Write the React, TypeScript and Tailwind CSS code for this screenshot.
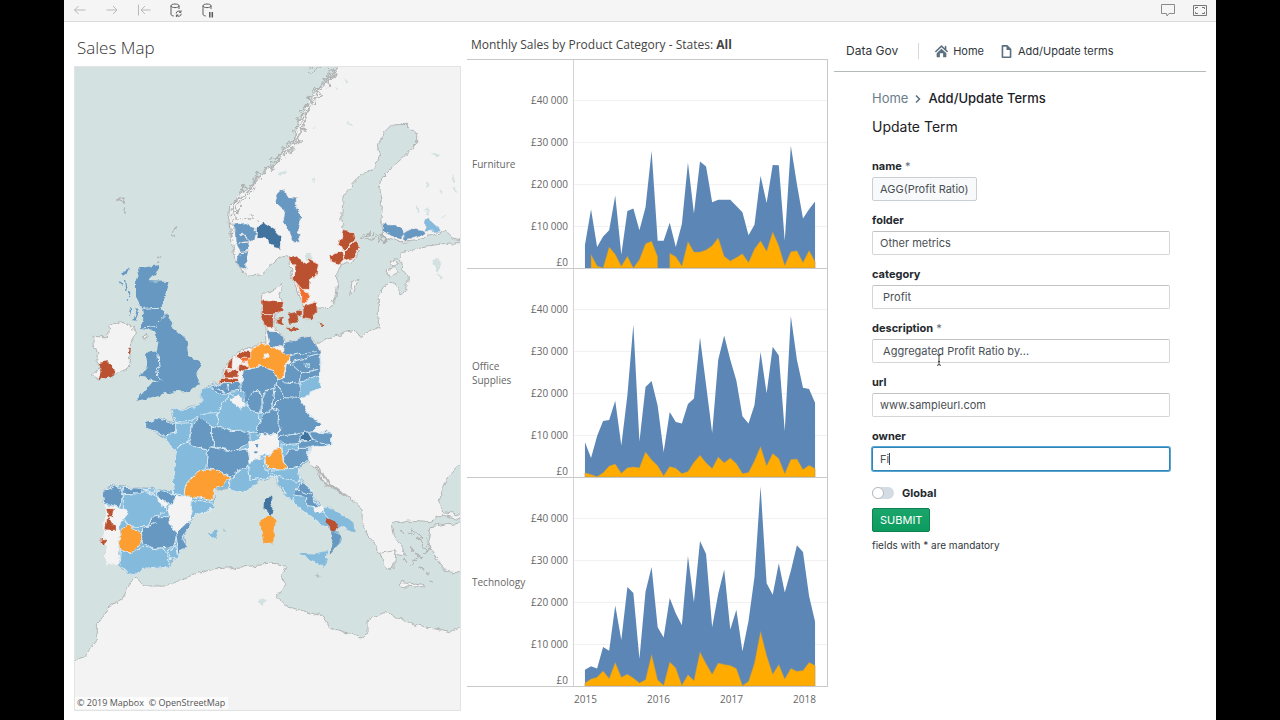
import type { ReactNode } from "react";

const MAP = {
  blue: "#6698c1",
  light: "#84bbdd",
  dark: "#41739f",
  red: "#ba5130",
  tangerine: "#f2702f",
  orange: "#fd9e32",
  land: "#f3f3f3",
  water: "#d3e2e1",
};

type Series = (number | null)[];

// monthly values in thousands of pounds, 2015-01 to 2018-03
const categories: { name: string; total: Series; part: Series }[] = [
  {
    name: "Furniture",
    total: [
      5.5, 14, 5, 7.5, 9, 17.3, 3.2, 13.6, 14.2, 9, 14.5, 28, 6.5, 6.5, 10.8, 5,
      10.5, 25.2, 13, 25.4, 24.2, 15.7, 16.3, 16.3, 16.3, 14.8, 13.3, 7.8, 10.3,
      22, 15.5, 24.6, 24.5, 6.5, 29.2, 20, 11.8, 14, 15.9,
    ],
    part: [
      null, 3.2, 0.5, 0, 5, 3.3, 0.4, 2.8, 0, 2, 5.8, 6.4, 2.7, null, 3.5, 2.7,
      0.5, 6.3, 3.8, 3.8, 4.3, 5.3, 7.2, 2.8, 1.7, 2.5, 3.4, 1.3, 4.5, 6.5, 4,
      8.6, 5.3, 0.6, 3.9, 4.1, 1.3, 4.2, 1.5,
    ],
  },
  {
    name: "Office Supplies",
    total: [
      8.3, 4.5, 9.8, 13.4, 13.6, 18.2, 7.5, 19.5, 36.4, 8.5, 21.5, 22.9, 17, 6,
      15.5, 13.1, 12.8, 17.4, 18.7, 33.3, 22, 10.5, 28, 33.8, 28, 23, 14.5,
      12.8, 17.2, 29.8, 20, 31.1, 29, 11, 38.4, 28, 21.3, 21, 17.7,
    ],
    part: [
      1, 0.6, 0.1, 1, 2.6, 3.1, 0.9, 2.2, 2.4, 2.2, 6, 4.1, 2.7, 0.3, 2.5, 2.1,
      0.8, 1.3, 3.5, 5.2, 3.4, 2, 4.8, 3.4, 4.5, 3.2, 0.8, 1.1, 3.9, 7.3, 2.7,
      5.6, 4.4, 0.8, 4.2, 4.3, 1.8, 2.8, 2,
    ],
  },
  {
    name: "Technology",
    total: [
      3.9, 4.7, 4.2, 9.3, 8.4, 19.2, 11, 23.6, 22.2, 6.5, 22.5, 28.4, 14, 11.6,
      21, 17.3, 14.5, 31, 20, 34.6, 31.5, 14, 22, 27.8, 13.5, 18.2, 8.3, 15.5,
      26, 47.6, 24.5, 21.8, 29.3, 22.3, 27.5, 33.6, 32, 21.5, 15.4,
    ],
    part: [
      0.7, 1.7, 2.1, 3.6, 1.8, 5.6, 2.1, 2.8, 1.9, 0.7, 1.5, 7.5, 1.4, 0.2, 5.7,
      4.3, 0.2, 2.7, 1.3, 8.1, 5.3, 2.8, 5.5, 5.1, 4.9, 4.2, 0.1, 1.1, 5.5, 13,
      7.3, 2.8, 5.1, 1.7, 4.2, 3.5, 3.7, 5.6, 4.9,
    ],
  },
];

const ticks = ["£40 000", "£30 000", "£20 000", "£10 000"];
const years = ["2015", "2016", "2017", "2018"];

// one closed area for every run of months without a gap
function areaPath(values: Series) {
  const x = (i: number) => (11 + i * 6.08).toFixed(1);
  let d = "";
  values.forEach((v, i) => {
    if (v === null) return;
    const first = i === 0 || values[i - 1] === null;
    const last = i === values.length - 1 || values[i + 1] === null;
    if (first) d += `M${x(i)} 208`;
    d += `L${x(i)} ${(208 - v * 4.19).toFixed(1)}`;
    if (last) d += `L${x(i)} 208Z`;
  });
  return d;
}

function ToolButton({ label, children }: { label: string; children: ReactNode }) {
  return (
    <button
      type="button"
      aria-label={label}
      className="flex h-5 w-8 items-center justify-center text-[#5c5c5c]"
    >
      <svg
        width="16"
        height="16"
        viewBox="0 0 16 16"
        fill="none"
        stroke="currentColor"
        strokeWidth="1"
      >
        {children}
      </svg>
    </button>
  );
}

function Toolbar() {
  return (
    <div className="flex h-[22px] justify-between border-b border-[#dcdcdc] bg-[#f5f5f5]">
      <div className="flex">
        <ToolButton label="Undo">
          <path d="M2.500 8H13.500M6.500 4l-4 4l4 4" stroke="#b9b9b9" />
        </ToolButton>
        <ToolButton label="Redo">
          <path d="M2.500 8H13M9 4l4 4-4 4" stroke="#b9b9b9" />
        </ToolButton>
        <ToolButton label="Revert">
          <path d="M2.500 2.500v11M5 8h9.500M9 4L5 8l4 4" stroke="#b9b9b9" />
        </ToolButton>
        <ToolButton label="Refresh">
          <path d="M3 3.800C3 1.400 11 1.400 11 3.800S3 6.200 3 3.800v8.700c0 .7 1.200 1.300 2.800 1.500M11 3.800V7" />
          <path d="M8.200 11.500a2.500 2.500 0 0 1 4.400-1.600M13.200 11.800a2.500 2.500 0 0 1-4.400 1.600M13 8.300v2h-2M8.400 15v-2h2" />
        </ToolButton>
        <ToolButton label="Pause">
          <path d="M3 3.800C3 1.400 11 1.400 11 3.800S3 6.200 3 3.800v8.700c0 .7 1.200 1.300 2.800 1.500M11 3.800V7" />
          <path d="M9.800 10v5.500M12.300 10v5.500" strokeWidth="1.500" />
        </ToolButton>
      </div>
      <div className="flex">
        <ToolButton label="Comments">
          <path
            d="M1.500 2.500h13v9H9l-2 2.500-.5-2.500h-5z"
            stroke="#8a8a8a"
          />
        </ToolButton>
        <ToolButton label="Full screen">
          <path d="M1.500 3.500h13v10h-13z" stroke="#777" />
          <path
            d="M3.500 7V5.500H6M10 5.500h2.500V7M12.500 10v1.500H10M6 11.500H3.500V10"
            stroke="#777"
          />
        </ToolButton>
      </div>
    </div>
  );
}

function SalesMap() {
  return (
    <section className="flex min-w-0 flex-col">
      <h2 className="flex h-11 items-center px-[3px] pt-2 font-['Open_Sans',sans-serif] text-[17px] font-light text-[#333]">
        Sales Map
      </h2>
      <div className="relative">
        <svg
          viewBox="222 198 1161 1935"
          className="block w-full"
          role="img"
          aria-label="Sales Map"
        >
          <defs>
            <filter
              id="coast"
              filterUnits="userSpaceOnUse"
              x="180"
              y="150"
              width="1250"
              height="2030"
              colorInterpolationFilters="sRGB"
            >
              <feTurbulence
                type="fractalNoise"
                baseFrequency="0.04"
                numOctaves="3"
                seed="4"
              />
              <feDisplacementMap
                in="SourceGraphic"
                scale="20"
                xChannelSelector="R"
                yChannelSelector="G"
              />
            </filter>
            <filter
              id="fjord"
              filterUnits="userSpaceOnUse"
              x="180"
              y="150"
              width="1250"
              height="2030"
              colorInterpolationFilters="sRGB"
            >
              <feTurbulence
                type="fractalNoise"
                baseFrequency="0.05"
                numOctaves="3"
                seed="9"
              />
              <feDisplacementMap
                in="SourceGraphic"
                scale="48"
                xChannelSelector="R"
                yChannelSelector="G"
              />
            </filter>
          </defs>
          <rect x="222" y="198" width="1161" height="1935" fill={MAP.water} />

          <g filter="url(#coast)" strokeLinejoin="round">
            <g fill={MAP.land} stroke="#b3b5b5" strokeWidth="3">
              {/* Scandinavia and Finland */}
              <path d="M1015 150L1012 200L982 245L942 280L927 310L902 350L892 385L882 430L852 445L832 490L792 515L752 560L712 590L692 620L687 665L695 720L705 770L720 810L745 828L780 825L815 795L840 772L860 765L868 775L875 830L892 870L908 912L910 955L935 958L952 940L952 925L990 922L1005 890L1012 840L1015 800L1060 785L1080 745L1050 700L1030 690L1025 650L1030 590L1062 550L1092 520L1127 500L1142 465L1134 440L1152 400L1177 375L1222 373L1250 400L1250 430L1212 470L1172 505L1142 535L1137 570L1147 620L1142 665L1145 690L1150 710L1200 725L1260 718L1300 705L1340 690L1350 715L1420 732V150z" />
              {/* mainland Europe */}
              <path d="M1420 726L1340 730L1300 735L1240 745L1200 765L1205 805L1225 830L1220 870L1200 880L1180 845L1150 860L1135 890L1135 940L1140 980L1100 995L1080 1010L1065 990L1010 1005L950 1030L925 1005L895 1015L860 1030L855 1010L830 990L820 980L825 940L850 915L840 885L845 850L825 865L785 885L782 940L795 985L798 1030L755 1040L710 1055L690 1080L670 1115L662 1148L632 1155L604 1170L602 1210L567 1222L542 1235L510 1222L522 1265L482 1255L437 1265L437 1285L482 1305L502 1320L522 1350L527 1380L527 1430L517 1470L462 1465L392 1462L342 1458L310 1475L317 1515L314 1590L302 1625L317 1640L314 1692L357 1693L382 1720L404 1725L432 1708L502 1702L527 1675L557 1640L552 1610L570 1570L592 1540L642 1515L637 1470L687 1462L732 1478L767 1450L785 1440L825 1430L845 1470L875 1500L930 1540L980 1580L1000 1610L988 1660L1025 1620L1005 1570L1060 1592L1055 1570L970 1525L940 1490L900 1440L895 1410L925 1378L945 1410L980 1450L1040 1485L1090 1530L1088 1580L1120 1630L1140 1660L1160 1700L1185 1705L1185 1660L1220 1665L1180 1610L1175 1575L1220 1560L1290 1565L1330 1546L1383 1558L1420 1552L1330 1538L1315 1500L1340 1440L1370 1400L1420 1345z" />
              <path d="M1420 1560L1340 1572L1290 1580L1280 1620L1310 1680L1340 1715L1420 1722z" />
              {/* North Africa */}
              <path d="M180 2010L252 1970L292 1920L292 1870L322 1825L367 1795L397 1740L410 1738L432 1758L502 1758L562 1730L622 1708L712 1702L812 1692L857 1698L842 1725L857 1750L832 1790L862 1820L912 1833L972 1850L992 1885L1052 1902L1077 1917L1104 1900L1104 1860L1157 1832L1192 1852L1252 1875L1352 1898L1420 1870V2180H180z" />
              <path d="M1202 1744L1277 1758L1270 1764L1202 1755z" />
              {/* Saaremaa, Gotland, Peloponnese */}
              <path d="M1155 810l30-10l15 15l-30 18zM1170 782l20-6l6 14l-18 8zM1055 850l22-18l-16 45l-12 10z" />
              <path d="M1140 1660l45-8l-4 46l-22 6z" />
              {/* Ireland */}
              <path d="M327 980L357 965L397 975L407 1005L392 1030L390 1070L382 1105L332 1125L302 1140L274 1125L302 1100L287 1080L297 1060L282 1035L282 1010L322 1010z" />
              <path d="M428 1015l12-12l-4 14z" />
              <path
                d="M1210 1680l14 10M1230 1640l12 14M1250 1610l10 12M1255 1700l14 12M1225 1600l12 4M1275 1715l12 6M1245 1660l14 6M1290 1740l10 6M1200 1590l12 8M945 1400l30 50l60 36M950 1395l40 60l50 34M350 600l18-6l2 12zM372 622l4 16M950 1725l10 6"
                strokeWidth="5"
              />
            </g>

            <g fill={MAP.water}>
              <path d="M918 762l18 0l2 14l-20 4zM1300 780l16-4l6 24l-8 22zM1308 822l20 8l-4 10zM772 1804l20-10l10 10l-14 10zM1292 460l26 4l-12 12zM832 520l20-12l8 6l-22 14z" />
              <path
                d="M1045 365l12 16M1355 530l12 14M1364 560l4 18M1280 545l6 14M1320 570l6 8M1250 620l4 20M1280 625v20M1325 655l14-6M940 540l8 2M1030 238l14 10M1010 265l6 2M940 378v6"
                stroke={MAP.water}
                strokeWidth="6"
              />
            </g>

            {/* Britain */}
            <g transform="translate(192 660)" fill={MAP.blue} stroke="#dcebf3" strokeWidth="2">
              <path
                d="M230 145L285 138L275 160L250 185L312 188L300 225L285 262L305 275L330 330L365 365L372 410L390 415L412 430L395 470L405 490L370 512L320 512L265 528L220 540L265 490L290 480L230 468L250 440L245 400L280 400L285 370L270 330L230 325L240 295L235 260L215 230L215 190z"
                stroke={MAP.blue}
                strokeWidth="4"
              />
              <path
                d="M232 325L270 320L305 288L308 275M235 268L285 265M282 400L285 440L278 460L292 478"
                fill="none"
                strokeWidth="3"
              />
              <path
                d="M175 160l20-12l-6 16zM165 185l8 14M195 210l10 18M200 265l-4 22M222 262l-12 40M185 180l4 30M192 235l6 8"
                stroke={MAP.blue}
                strokeWidth="4"
              />
              <path
                d="M325 40l4 10M335 22l-6 14M280 115l8-6M276 128l10-2"
                stroke="#b3b5b5"
                strokeWidth="4"
              />
              <path
                d="M110 430l26-4l4 14l10 16l-20 12l-22 10l4-22z"
                fill={MAP.red}
                stroke={MAP.red}
                strokeWidth="5"
              />
              <path d="M194 386l6 0l-2 18l-6-4z" fill={MAP.red} stroke="none" />
            </g>

            {/* Nordics and northern Germany */}
            <g
              transform="translate(660 540)"
              fill={MAP.red}
              stroke="#f6ece8"
              strokeWidth="2"
            >
              <path
                d="M175 38L192 30L205 50L232 52L232 90L245 110L235 140L240 185L222 188L205 150L190 120L195 95L165 70z"
                fill={MAP.blue}
              />
              <path
                d="M110 145L130 128L165 150L182 170L180 210L165 205L145 178L108 172z"
                fill={MAP.dark}
              />
              <path
                d="M45 135L75 130L105 148L100 175L85 190L78 225L78 270L58 262L52 245L62 215L48 190z"
                fill={MAP.blue}
                stroke={MAP.blue}
              />
              <path d="M50 190L90 185L62 160M60 215L82 212" fill="none" strokeWidth="4" />
              <path d="M485 132L515 135L548 150L545 178L520 172L488 152z" fill={MAP.blue} />
              <path d="M548 158L580 145L612 150L618 162L550 182z" fill={MAP.blue} />
              <path d="M615 125L628 115L655 140L655 155L615 158z" fill={MAP.light} />
              <path d="M368 152L400 155L405 180L370 212L358 195z" />
              <path d="M332 230L368 212L375 240L362 255L335 245z" />
              <path d="M375 212L408 180L418 200L400 235L375 242z" />
              <path d="M205 235L225 228L260 248L265 235L295 250L290 285L270 300L268 325L240 325L220 300L222 260z" />
              <path
                d="M230 315L265 340L270 350L258 370L245 370L245 345z"
                fill={MAP.tangerine}
              />
              <path d="M248 378L290 366L292 400L275 418L250 412z" />
              <path d="M122 360L190 368L188 392L160 402L125 400z" />
              <path d="M122 400L160 402L160 442L135 442z" />
              <path d="M168 415L190 412L190 434L172 430zM205 405L230 400L235 425L212 430zM230 390l12 0l-2 18l-10-6zM200 445l28 0l-8 8zM300 430l10 2l-4 6z" stroke={MAP.red} />
              <path d="M138 450L165 452L195 470L190 505L150 495z" fill={MAP.blue} />
              <path
                d="M195 490L235 475L265 465L290 495L300 520L302 600L230 605L205 570L210 530L190 520z"
                fill={MAP.blue}
              />
              <path
                d="M95 505L150 492L172 510L212 528L198 545L190 598L165 600L155 570L130 568L120 552L105 572L80 560z"
                fill={MAP.orange}
              />
              <path d="M132 522l12 0l0 10l-10 0z" fill={MAP.land} />
              <path d="M48 525L70 512L92 515L92 535L60 535z" />
              <path d="M60 535L90 535L82 550L68 548z" fill={MAP.tangerine} />
              <path d="M55 550L88 560L80 580L52 572zM28 540L38 536L36 565L24 568zM15 570L52 575L55 592L10 590zM2 592L55 596L58 625L34 622L0 606z" />
            </g>

            {/* Germany and Austria */}
            <g fill={MAP.blue} stroke="#dcebf3" strokeWidth="3">
              <path d="M730 1112L780 1100L822 1112L830 1140L855 1135L862 1090L960 1060L962 1140L965 1160L900 1195L930 1250L965 1270L940 1295L995 1300L995 1335L930 1345L925 1375L860 1402L850 1380L900 1340L840 1325L835 1300L770 1305L768 1290L790 1240L730 1200L725 1150z" />
              <path
                d="M785 1195L800 1170L825 1165L835 1130M785 1195L788 1240M825 1165L815 1225L840 1230L835 1300M815 1225L850 1190L895 1192M850 1190L830 1150M860 1080L905 1120L960 1105M870 1070L950 1055M790 1240L820 1225M840 1310L900 1300L940 1295M895 1330L935 1320L995 1335M905 1120L900 1150L850 1145"
                fill="none"
              />
              <path d="M900 1150L962 1125L965 1160L900 1195z" fill={MAP.light} />
              <path d="M915 1290L925 1298L938 1320L892 1325L912 1308z" fill={MAP.dark} />
              <path d="M912 1090l16-2l4 14l-18 2z" fill={MAP.light} />
            </g>

            {/* base tone of France, Iberia and Italy, under the regions */}
            <path
              d="M662 1148L632 1155L604 1170L602 1210L567 1222L542 1235L510 1222L522 1265L482 1255L437 1265L437 1285L482 1305L502 1320L522 1350L527 1380L527 1430L517 1470L462 1465L392 1462L342 1458L310 1475L317 1515L314 1590L302 1625L317 1640L314 1692L357 1693L382 1720L404 1725L432 1708L502 1702L527 1675L557 1640L552 1610L570 1570L592 1540L642 1515L637 1470L687 1462L732 1478L767 1450L785 1440L825 1430L845 1470L875 1500L930 1540L980 1580L1000 1610L988 1660L1025 1620L1005 1570L1060 1592L1055 1570L970 1525L940 1490L900 1440L895 1410L925 1378L860 1330L770 1305L768 1290L790 1240L730 1200L725 1150z"
              fill={MAP.light}
            />

            {/* France and Iberia */}
            <g
              transform="translate(192 1140)"
              fill={MAP.light}
              stroke="#dcebf3"
              strokeWidth="3"
            >
              <path d="M412 30L440 20L500 40L585 100L580 155L530 162L445 138L405 112L335 128L318 82L350 95L410 70z" />
              <path d="M335 130L385 128L370 185L330 212L305 175z" />
              <path d="M370 188L435 210L430 268L400 275L360 345L325 340L335 240L330 210z" />
              <path d="M497 298L545 262L600 290L575 310L540 338L497 325z" />
              <path d="M385 358L450 370L450 382L400 405L378 425z" />
              <path d="M178 345L245 335L280 345L285 375L310 385L265 420L250 440L195 438L178 405z" />
              <path d="M240 328L285 330L270 340z" />
              <path d="M165 545L170 512L205 520L235 502L300 508L318 545L310 562L240 568L212 585L190 580z" />
              <path d="M310 512L335 500L342 530L320 540z" />
              <g fill={MAP.blue}>
                <path d="M405 112L445 138L448 195L435 210L375 190L385 140z" />
                <path d="M448 138L500 155L555 152L555 190L510 215L448 198z" />
                <path d="M435 200L510 215L550 205L560 250L500 295L470 275L428 270z" />
                <path d="M245 125L280 115L335 130L335 160L300 165L245 145z" />
                <path d="M118 335L165 318L178 345L165 382L125 370z" />
                <path d="M175 322L240 325L225 342L178 340z" />
                <path d="M282 330L340 345L320 375L285 352z" />
                <path d="M250 440L275 410L315 410L322 440L340 455L330 500L270 505L235 490L232 450z" />
                <path d="M365 428L378 435L355 475L368 495L345 525L335 460z" />
                <path d="M440 18L475 8L530 8L532 34L500 36L480 48L455 35z" />
                <path d="M545 60L575 30L590 40L592 100L560 95z" />
                <path d="M455 22l24 8l0 14M490 12l4 20" fill="none" />
              </g>
              <path d="M412 100L460 98L460 135M500 40L470 80L462 100M245 442l30-12" fill="none" />
              <g fill={MAP.land} stroke="none">
                <path d="M500 60L525 46L545 75L530 86L512 78z" />
                <path d="M282 350L318 378L300 384L284 372z" />
                <path d="M340 348L385 350L378 420L340 455L318 430L312 390z" />
                <path d="M123 375L180 385L192 400L165 440L168 500L162 554L120 554L124 500L108 485L120 450z" />
              </g>
              <path
                d="M405 268L425 275L465 270L497 298L445 335L445 362L360 345L365 312z"
                fill={MAP.orange}
              />
              <path
                d="M170 450L198 436L230 460L232 485L205 520L170 512L165 480z"
                fill={MAP.orange}
              />
              <path
                d="M128 388l20 0l-4 14l6 10l-18-2zM130 415l8 0l2 18l12 4l0 12l-26-2zM110 482l12-2l-6 16z"
                fill={MAP.red}
                stroke={MAP.red}
                strokeWidth="2"
              />
              <path d="M435 462l20-6l4 12l-14 4zM474 450l8 4" stroke={MAP.light} />
            </g>

            {/* Alps and Italy */}
            <g
              transform="translate(600 1140)"
              fill={MAP.light}
              stroke="#dcebf3"
              strokeWidth="3"
            >
              <path d="M145 250L192 225L195 270L220 290L150 300z" />
              <path d="M245 195L300 190L285 215L250 240z" />
              <path d="M215 270L295 268L300 305L325 330L375 400L400 430L380 445L335 410L280 370L240 315z" />
              <path d="M370 385L395 385L460 435L455 452L400 430z" stroke={MAP.light} />
              <path d="M300 520L340 522L380 515L370 562z" stroke={MAP.light} />
              <path d="M215 290L280 300L300 305M280 370L285 345" fill="none" />
              <g fill={MAP.blue}>
                <path d="M250 240L275 205L325 205L325 235L295 262L262 268z" />
                <path d="M300 310L330 325L335 350L355 385L320 380L320 350L285 345z" />
                <path d="M395 455L420 470L405 500L388 522L400 480z" stroke={MAP.blue} />
                <path d="M295 330L330 345" />
              </g>
              <g fill={MAP.land} stroke="none">
                <path d="M145 185L175 175L205 155L240 175L240 205L215 225L180 220L175 240L150 248z" />
                <path d="M340 385l30-10l2 16l-24 10z" />
              </g>
              <path
                d="M160 190l16 4l-6 12zM188 165l12-4l0 12zM160 210l12 2l-8 6z"
                fill={MAP.blue}
                stroke="none"
              />
              <path
                d="M192 225L210 228L222 208L245 205L250 245L262 268L215 265L205 275z"
                fill={MAP.orange}
              />
              <path
                d="M182 425L210 405L225 425L218 485L192 488z"
                fill={MAP.orange}
                stroke={MAP.orange}
              />
              <path
                d="M197 355L215 345L218 375L208 400L195 385z"
                fill={MAP.dark}
                stroke={MAP.dark}
              />
              <path d="M380 415L415 430L405 455L385 445z" fill={MAP.red} stroke={MAP.red} />
            </g>
          </g>

          {/* broken coast of Norway and the archipelagos */}
          <g filter="url(#fjord)" fill="none" stroke="#b0b2b2" strokeWidth="4">
            <path d="M1012 195L982 245L942 280L927 310L902 350L892 385L882 430L852 445L832 490L792 515L752 560L712 590L700 620L694 665L700 720" />
            <path d="M930 215L960 200L1000 205L970 250L930 295L918 350L905 400L870 440L830 480L780 520L735 570L705 605L700 660" />
            <path d="M1000 225L950 290L915 345L895 420L850 470M770 560L720 600L710 650L770 655" />
            <path d="M1085 715L1110 700L1140 710L1165 722L1130 720L1100 712M1240 1590L1290 1650L1230 1690" />
          </g>
        </svg>
        <p className="absolute bottom-[2px] left-0 bg-white/70 px-[3px] font-['Open_Sans',sans-serif] text-[9px] leading-3 whitespace-pre text-[#555]">
          © 2019 Mapbox{"  "}© OpenStreetMap
        </p>
        <div className="pointer-events-none absolute inset-0 border border-[#e2e4e4]" />
      </div>
    </section>
  );
}

function SalesChart() {
  return (
    <section className="flex min-w-0 flex-col font-['Open_Sans',sans-serif] text-[#666]">
      <h2 className="flex h-[37px] items-center px-1 pt-2 text-xs whitespace-pre text-[#444]">
        Monthly Sales by Product Category - States: <b>All</b>
      </h2>
      <div className="border-t border-r border-[#c9c9c9]">
        {categories.map((category) => (
          <div
            key={category.name}
            className="grid grid-cols-[54px_53px_minmax(0,1fr)] border-b border-[#c9c9c9]"
          >
            <div className="flex items-center pl-[5px] text-[10px] leading-[14px]">
              {category.name}
            </div>
            <div className="flex flex-col border-r border-[#d4d4d4] pt-[19px] pr-[5px] text-right text-[10px] whitespace-nowrap">
              {ticks.map((tick) => (
                <div key={tick} className="flex h-[42px] items-center justify-end">
                  {tick}
                </div>
              ))}
              <div className="flex h-[21px] items-end justify-end leading-3">£0</div>
            </div>
            <svg
              viewBox="0 0 254 208"
              preserveAspectRatio="none"
              className="block h-[208px] w-full"
              role="img"
              aria-label={category.name}
            >
              <path
                d="M0 40.500H254M0 82.500H254M0 124.500H254M0 166.500H254"
                stroke="#f1f1f1"
              />
              <path d={areaPath(category.total)} fill="#5c86b5" />
              <path
                d={areaPath(category.part)}
                fill="#ffab00"
                stroke="#a89a6a"
                strokeWidth="0.500"
              />
            </svg>
          </div>
        ))}
      </div>
      <div className="flex pt-1 pl-[82px] text-[10px] leading-4">
        {years.map((year) => (
          <div key={year} className="w-[73px] shrink-0 text-center">
            {year}
          </div>
        ))}
      </div>
    </section>
  );
}

const inputClass =
  "block h-6 w-full rounded-[2px] border border-[#d3d6d8] border-t-[#bfc3c5] bg-white px-[7px] text-[11px] text-[#4a5055] outline-none";

function Field({
  id,
  label,
  required,
  children,
}: {
  id: string;
  label: string;
  required?: boolean;
  children: ReactNode;
}) {
  return (
    <div className="relative">
      <label
        htmlFor={id}
        className="mb-px block text-[11px] leading-5 font-bold text-[#24292e]"
      >
        {label}
        {required && <span className="font-normal text-[#5c6b77]"> *</span>}
      </label>
      {children}
    </div>
  );
}

function TermForm() {
  return (
    <section className="min-w-0 font-[Inter,sans-serif] text-[#30363b]">
      <nav className="flex h-[50px] items-center border-b border-[#b4b9b9] px-3 pt-[9px]">
        <span className="pr-5 text-xs">Data Gov</span>
        <span className="h-4 border-l border-[#d5d9dc]" />
        <a href="#home" className="ml-4 flex items-center gap-[5px] text-[11px]">
          <svg width="13" height="13" viewBox="0 0 16 16" fill="#5c7080">
            <path d="M2 10v4.500c0 .3.200.5.500.5H6v-5h4v5h3.500c.3 0 .5-.2.500-.5V10L8 4.500zM15.700 7.300L14 5.700V2c0-.6-.4-1-1-1s-1 .4-1 1v1.900L8.700.7a1 1 0 0 0-1.400 0l-7 6.600a1 1 0 0 0 1.400 1.400L8 2.800l6.300 5.900a1 1 0 0 0 1.400-1.400z" />
          </svg>
          Home
        </a>
        <a href="#terms" className="ml-4 flex items-center gap-[5px] text-[11px]">
          <svg width="13" height="13" viewBox="0 0 16 16" fill="#5c7080">
            <path d="M9 0H3c-.5 0-1 .500-1 1v14c0 .5.500 1 1 1h10c.5 0 1-.5 1-1V5zm3 14H4V2h4v4h4z" />
          </svg>
          Add/Update terms
        </a>
      </nav>
      <div className="pt-[17px] pr-9 pl-[38px]">
        <div className="flex h-5 items-center text-[13px]">
          <a href="#home" className="text-[#6b7d8b]">
            Home
          </a>
          <svg width="8" height="10" viewBox="0 0 8 10" className="mx-[6px]">
            <path d="M2 1.500L5.500 5L2 8.500" fill="none" stroke="#5c7080" strokeWidth="1.500" />
          </svg>
          <span className="font-medium text-[#1c2126]">Add/Update Terms</span>
        </div>
        <h1 className="mt-2 text-sm leading-5 text-[#1c2126]">Update Term</h1>
        <form
          className="mt-[19px] flex flex-col gap-[9px]"
          onSubmit={(e) => e.preventDefault()}
        >
          <Field id="name" label="name" required>
            <button
              id="name"
              type="button"
              className="block h-6 rounded-[2px] border border-[#c9d0d5] bg-[#f7f9fa] px-[7px] text-[11px] text-[#4a5055]"
            >
              AGG(Profit Ratio)
            </button>
          </Field>
          <Field id="folder" label="folder">
            <input id="folder" className={inputClass} defaultValue="Other metrics" />
          </Field>
          <Field id="category" label="category">
            <input id="category" className={inputClass} defaultValue=" Profit" />
          </Field>
          <Field id="description" label="description" required>
            <input
              id="description"
              className={inputClass}
              defaultValue=" Aggregated Profit Ratio by..."
            />
            <svg
              width="6"
              height="12"
              viewBox="0 0 6 12"
              className="absolute top-9 left-16"
              fill="none"
              stroke="#333"
              strokeWidth="0.900"
            >
              <path d="M1 .6Q3 .6 3 2V10Q3 11.400 1 11.400M5 .6Q3 .6 3 2M3 10Q3 11.400 5 11.400M2 7.500H4" />
            </svg>
          </Field>
          <Field id="url" label="url">
            <input id="url" className={inputClass} defaultValue="www.sampleurl.com" />
          </Field>
          <Field id="owner" label="owner">
            <input
              id="owner"
              className="block h-6 w-full rounded-[2px] border border-[#2e86b8] bg-white px-[7px] text-[11px] text-[#4a5055] ring-1 ring-[#5aa6d2] outline-none"
              defaultValue="Fi"
            />
            <span className="absolute bottom-[6px] left-[17px] h-3 w-px bg-[#444]" />
          </Field>
          <label className="mt-[3px] flex h-5 items-center gap-2 text-[11px] font-bold text-[#24292e]">
            <input
              type="checkbox"
              role="switch"
              className="flex h-3 w-[22px] appearance-none items-center rounded-full bg-[#d3dce3] before:block before:size-3 before:rounded-full before:border before:border-[#b4bcc2] before:bg-white"
            />
            Global
          </label>
          <button
            type="submit"
            className="-mt-1 h-6 self-start rounded-[2px] border border-[#0c8350] bg-[#10a266] bg-linear-to-b from-[#1ba56c] to-[#0a9c5e] px-[7px] text-[11px] text-white"
          >
            SUBMIT
          </button>
          <p className="-mt-1 text-[10px] leading-4">fields with * are mandatory</p>
        </form>
      </div>
    </section>
  );
}

export default function App() {
  return (
    <div className="min-h-screen bg-black px-16">
      <div className="min-h-screen bg-white">
        <Toolbar />
        <main className="grid grid-cols-[387fr_361fr_372fr] gap-[6px] px-[10px] pb-[9px]">
          <SalesMap />
          <SalesChart />
          <TermForm />
        </main>
      </div>
    </div>
  );
}
